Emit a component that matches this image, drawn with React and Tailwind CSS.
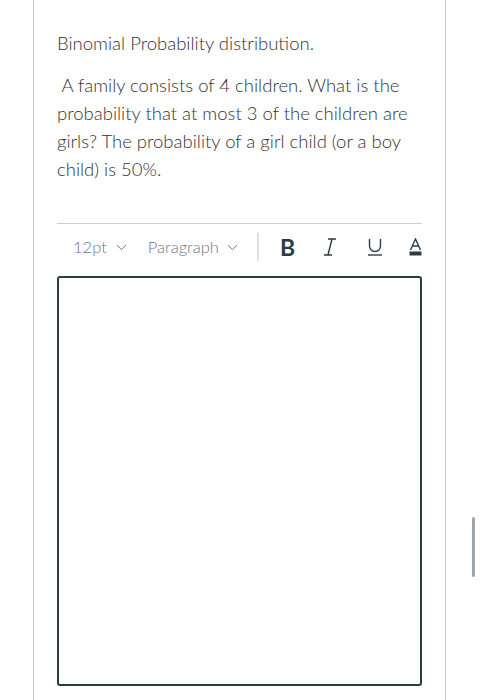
import React from "react";
import { ChevronDown } from "lucide-react";

export default function App() {
  return (
    <div className="relative h-[700px] w-[480px] overflow-hidden bg-white font-['Lato','Liberation_Sans',sans-serif] text-[#333]">
      <div className="ml-[33px] h-full w-[413px] border-x border-[#c7cdd1] pl-[23px] pr-[23px] pt-[29px]">
        <p className="text-[18.5px] font-light leading-[28px]">Binomial Probability distribution.</p>
        <p className="mt-[14px] text-[18.5px] font-light leading-[28px]">
          {"\u00a0"}A family consists of 4 children. What is the probability that at most 3 of the children are girls? The probability of a girl child (or a boy child) is 50%.
        </p>

        <div className="mt-[40px] border-t border-[#c7cdd1]">
          <div className="flex h-[46px] items-center pl-[16px] text-[16.5px] font-light text-[#6b7780]">
            <span>12pt</span>
            <ChevronDown size={17} strokeWidth={1.4} className="ml-[6px]" />
            <span className="ml-[18px]">Paragraph</span>
            <ChevronDown size={17} strokeWidth={1.4} className="ml-[5px]" />
            <div className="ml-[16px] h-[28px] w-[2px] bg-[#dde1e4]" />
            <span className="ml-[21px] text-[23px] font-bold leading-none text-[#2d3b45]">B</span>
            <svg width="14" height="18" viewBox="0 0 14 18" className="ml-[28px] text-[#2d3b45]" fill="none" stroke="currentColor" strokeWidth="1.4">
              <path d="M5 1h8M1 17h8M9 1L5 17" />
            </svg>
            <svg width="16" height="18" viewBox="0 0 16 18" className="ml-[30px] text-[#2d3b45]" fill="none" stroke="currentColor" strokeWidth="1.4">
              <path d="M2.5 1v7a5.5 5.5 0 0 0 11 0V1" />
              <path d="M1 17h14" />
            </svg>
            <svg width="13" height="18" viewBox="0 0 13 18" className="ml-[26px] text-[#2d3b45]" fill="none" stroke="currentColor" strokeWidth="1.4">
              <path d="M1.5 12L6.5 1l5 11M3.5 8h6" />
              <rect x="0.5" y="13.5" width="12" height="4" fill="currentColor" stroke="none" />
            </svg>
          </div>
          <div className="mt-[6px] h-[410px] rounded-[3px] border-[2.5px] border-[#2d3b45]" />
        </div>
      </div>
      <div className="absolute left-[472px] top-[517px] h-[60px] w-[3px] rounded bg-[#9ea6ad]" />
    </div>
  );
}
